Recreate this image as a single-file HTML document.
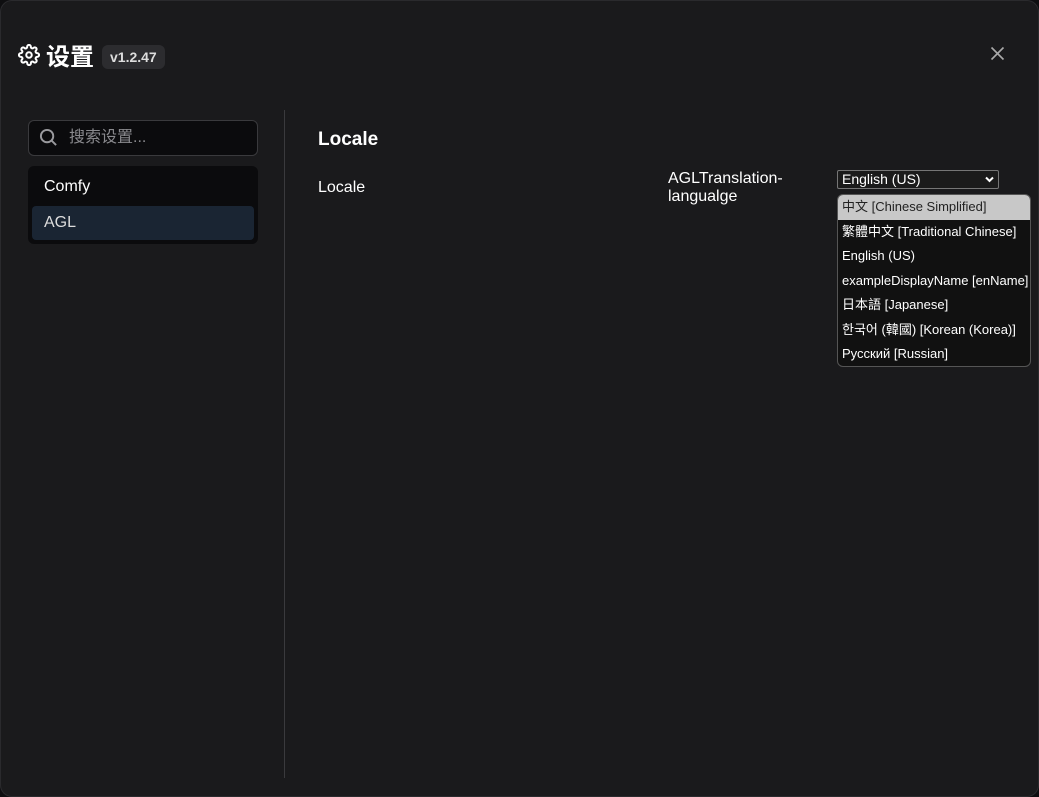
<!DOCTYPE html>
<html><head><meta charset="utf-8"><style>
*{box-sizing:border-box;margin:0;padding:0}
body{width:1039px;height:797px;background:#0e0e10;font-family:"Liberation Sans","Noto Sans CJK SC",sans-serif;color:#fff;overflow:hidden;position:relative}
.dlg{position:absolute;left:0;top:0;width:1039px;height:797px;background:#1a1a1c;border-radius:12px;outline:1px solid #2a2a2d;outline-offset:-1px}
.abs{position:absolute}
.title{left:18px;top:37px;font-size:24px;font-weight:bold;display:flex;align-items:center}
.ver{left:102px;top:45px;background:#2c2c2f;border-radius:6px;padding:4px 8px;font-size:14px;font-weight:bold;color:#ddd}
.search{left:28px;top:120px;width:230px;height:36px;border:1px solid #3a3a3d;border-radius:6px;background:#0b0b0d}
.search span{position:absolute;left:40px;top:7px;font-size:16px;line-height:20px;color:#8a8a8e}
.nav{left:28px;top:166px;width:230px;height:78px;background:#0b0b0d;border-radius:6px}
.item{position:absolute;left:4px;width:222px;height:34px;padding:10px 12px;font-size:16px;line-height:14px}
.sep{left:284px;top:110px;width:1px;height:668px;background:#3a3a3d}
.sel{left:837px;top:170px;width:162px;height:19px;border:1px solid #767676;background:#1b1b1b;font-size:14px;line-height:15px;padding:1px 4px;border-radius:2px}
.dd{left:837px;top:194px;width:194px;height:173px;background:#111;border:1px solid #555;border-radius:6px;overflow:hidden}
.dd div{height:24.5px;font-size:13px;line-height:14px;padding:5px 4px;white-space:nowrap;overflow:hidden}
</style></head><body><div class="dlg">
<div class="abs title"><svg width="22" height="22" viewBox="0 0 24 24" fill="none" stroke="#fff" stroke-width="2.2"><circle cx="12" cy="12" r="3"/><path d="M19.4 15a1.65 1.65 0 0 0 .33 1.820l.06.06a2 2 0 1 1-2.83 2.83l-.06-.06a1.65 1.65 0 0 0-1.820-.33 1.65 1.65 0 0 0-1 1.510V21a2 2 0 1 1-4 0v-.09A1.65 1.65 0 0 0 9 19.4a1.65 1.65 0 0 0-1.820.33l-.06.06a2 2 0 1 1-2.830-2.830l.06-.06A1.65 1.65 0 0 0 4.680 15a1.65 1.65 0 0 0-1.510-1H3a2 2 0 1 1 0-4h.09A1.65 1.65 0 0 0 4.6 9a1.65 1.65 0 0 0-.33-1.820l-.06-.06a2 2 0 1 1 2.830-2.830l.06.06A1.65 1.65 0 0 0 9 4.680a1.65 1.65 0 0 0 1-1.510V3a2 2 0 1 1 4 0v.09a1.65 1.65 0 0 0 1 1.510 1.65 1.65 0 0 0 1.820-.33l.06-.06a2 2 0 1 1 2.830 2.830l-.06.06A1.65 1.65 0 0 0 19.4 9a1.65 1.65 0 0 0 1.510 1H21a2 2 0 1 1 0 4h-.09a1.65 1.65 0 0 0-1.510 1z"/></svg><span style="margin-left:6px">设置</span></div>
<div class="abs ver">v1.2.47</div>
<svg class="abs" style="left:990px;top:46px" width="15" height="15" viewBox="0 0 15 15" stroke="#aaa" stroke-width="1.6"><path d="M1.5 1.5L13.5 13.5M13.5 1.5L1.5 13.5"/></svg>
<div class="abs search"><svg style="position:absolute;left:10px;top:7px" width="19" height="19" viewBox="0 0 20 20" fill="none" stroke="#9a9a9e" stroke-width="2"><circle cx="8.5" cy="8.5" r="6.5"/><path d="M13.5 13.5L18 18"/></svg><span>搜索设置...</span></div>
<div class="abs nav"><div class="item" style="top:4px">Comfy</div><div class="item" style="top:40px;background:#1a2533;border-radius:4px;color:#ddd">AGL</div></div>
<div class="abs sep"></div>
<div class="abs" style="left:318px;top:129px;font-size:19px;font-weight:bold">Locale</div>
<div class="abs" style="left:318px;top:179px;font-size:16px">Locale</div>
<div class="abs" style="left:668px;top:170px;font-size:16px;line-height:18px">AGLTranslation-<br>langualge</div>
<div class="abs sel">English (US)<svg style="position:absolute;right:4px;top:5px" width="9" height="7" viewBox="0 0 9 7" fill="none" stroke="#fff" stroke-width="2"><path d="M1 1.5L4.5 5L8 1.5"/></svg></div>
<div class="abs dd">
<div style="background:#c8c8c8;color:#222">中文 [Chinese Simplified]</div>
<div>繁體中文 [Traditional Chinese]</div>
<div>English (US)</div>
<div>exampleDisplayName [enName]</div>
<div>日本語 [Japanese]</div>
<div>한국어 (韓國) [Korean (Korea)]</div>
<div>Русский [Russian]</div>
</div>
</div></body></html>
